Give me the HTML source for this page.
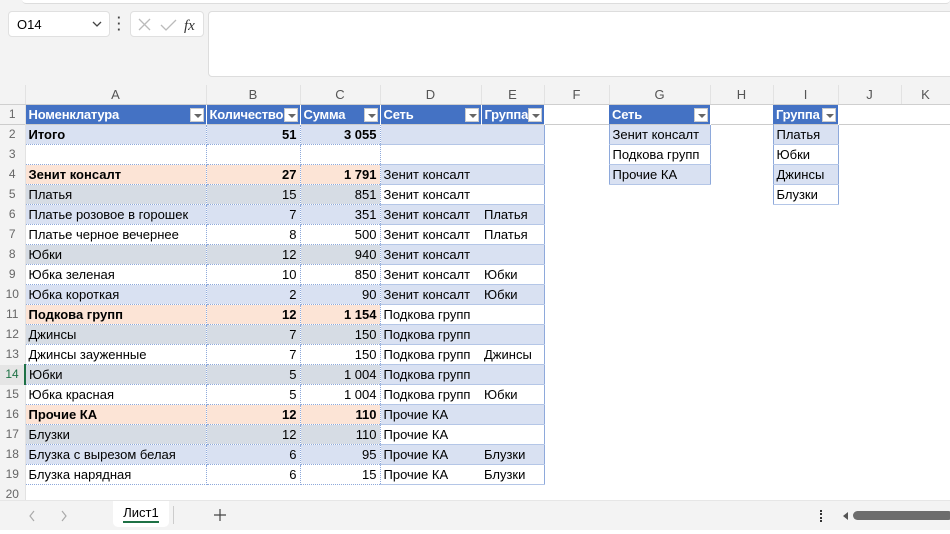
<!DOCTYPE html>
<html><head><meta charset="utf-8">
<style>
*{box-sizing:border-box;margin:0;padding:0}
body{width:950px;height:534px;overflow:hidden;background:#fff;font-family:"Liberation Sans",sans-serif;font-size:13px;color:#000;position:relative}
.top{position:absolute;left:0;top:0;width:950px;height:85px;background:#f3f3f3}
.topbar{position:absolute;left:22px;top:0;width:928px;height:4px;background:#fff;border-bottom:1px solid #ddd;border-radius:0 0 4px 4px}
.namebox{position:absolute;left:8px;top:11px;width:102px;height:26px;background:#fff;border:1px solid #e0e0e0;border-radius:4px;padding:5px 8px;font-size:13px}
.namebox .chev{position:absolute;right:6px;top:6px}
.dots{position:absolute;left:117px;top:15px;color:#444;font-size:13px;line-height:6px;font-weight:bold}
.fxbox{position:absolute;left:130px;top:11px;width:74px;height:26px;background:#fff;border:1px solid #e0e0e0;border-radius:4px}
.fbar{position:absolute;left:208px;top:11px;width:750px;height:66px;background:#fff;border:1px solid #ddd;border-radius:4px}
table{position:absolute;left:0;top:85px;width:950px;border-collapse:collapse;table-layout:fixed}
td{height:20px;padding:0 3px;white-space:nowrap;overflow:hidden;line-height:19px}
tr.ch td{height:19px;background:#f3f3f3;color:#555;text-align:center;border-right:1px solid #e2e2e2;border-bottom:1px solid #cfcfcf;font-size:13px}
td.rh{background:#f3f3f3;color:#666;text-align:center;padding:0;font-size:12px;border-right:1px solid #e2e2e2}
.r{text-align:right}
.b{font-weight:bold}
.h{background:#4472c4;color:#fff;font-weight:bold;position:relative;border-right:1px solid #fff;padding-right:18px;letter-spacing:-0.2px}
.h .dd{position:absolute;right:2px;top:3px;width:14px;height:14px;background:#fff;border:1px solid #ccc}
.h .dd:after{content:"";position:absolute;left:3px;top:5px;border-left:4px solid transparent;border-right:4px solid transparent;border-top:4px solid #666}
.bl{background:#d9e1f2}.pe{background:#fce4d6}.gr{background:#d6dce4}.wh{background:#fff}
.t1{border-right:1px dotted #8ea9db;border-bottom:1px dotted #8ea9db}
.t2{border-bottom:1px solid #b4c6e7}
.le{border-left:1px solid #8ea9db}.re{border-right:1px solid #8ea9db}
.tabs{position:absolute;left:0;top:500px;width:950px;height:34px;background:#f3f3f3;border-top:1px solid #e6e6e6}
.tab{position:absolute;left:113px;top:0;width:56px;height:26px;background:#fff;border-radius:0 0 5px 5px;text-align:center;font-size:13px;padding-top:4px}
.tab span{border-bottom:2px solid #1e7145;padding-bottom:1px}
.status{position:absolute;left:0;top:530px;width:950px;height:4px;background:#fff}
</style></head><body>
<div class="top">
<div class="topbar"></div>
<div class="namebox">O14<svg class="chev" width="12" height="12" viewBox="0 0 12 12"><path d="M2 4l4 4 4-4" fill="none" stroke="#444" stroke-width="1.3"/></svg></div>
<div class="dots">·<br>·<br>·</div>
<div class="fxbox"><svg width="74" height="26" viewBox="0 0 74 26"><path d="M8 7l11 11M19 7L8 18" stroke="#bbb" stroke-width="1.3" fill="none"/><path d="M30 13l5 5 10-10" stroke="#bbb" stroke-width="1.3" fill="none"/><text x="53" y="18" font-family="Liberation Serif" font-style="italic" font-size="15" fill="#333">fx</text></svg></div>
<div class="fbar"></div>
</div>
<table>
<colgroup><col style="width:25px"><col style="width:181px"><col style="width:94px"><col style="width:80px"><col style="width:101px"><col style="width:63px"><col style="width:65px"><col style="width:101px"><col style="width:63px"><col style="width:65px"><col style="width:63px"><col style="width:49px"></colgroup>
<tr class="ch"><td style="background:#f3f3f3"></td><td>A</td><td>B</td><td>C</td><td>D</td><td>E</td><td>F</td><td>G</td><td>H</td><td>I</td><td>J</td><td>K</td></tr>
<tr style="border-bottom:1px solid #ccc"><td class="rh">1</td><td class="h">Номенклатура<i class="dd"></i></td><td class="h">Количество<i class="dd"></i></td><td class="h">Сумма<i class="dd"></i></td><td class="h">Сеть<i class="dd"></i></td><td class="h">Группа<i class="dd"></i></td><td></td><td class="h">Сеть<i class="dd"></i></td><td></td><td class="h">Группа<i class="dd"></i></td><td></td><td></td></tr>
<tr><td class="rh">2</td><td class="bl t1 b">Итого</td><td class="bl t1 b r">51</td><td class="bl t1 b r">3 055</td><td class="bl t2"></td><td class="bl t2 re"></td><td></td><td class="bl t2 le re">Зенит консалт</td><td></td><td class="bl t2 le re">Платья</td><td></td><td></td></tr>
<tr><td class="rh">3</td><td class="wh t1"></td><td class="wh t1"></td><td class="wh t1"></td><td class="t2"></td><td class="t2 re"></td><td></td><td class="t2 le re">Подкова групп</td><td></td><td class="t2 le re">Юбки</td><td></td><td></td></tr>
<tr><td class="rh">4</td><td class="pe t1 b">Зенит консалт</td><td class="pe t1 b r">27</td><td class="pe t1 b r">1 791</td><td class="bl t2">Зенит консалт</td><td class="bl t2 re"></td><td></td><td class="bl t2 le re">Прочие КА</td><td></td><td class="bl t2 le re">Джинсы</td><td></td><td></td></tr>
<tr><td class="rh">5</td><td class="gr t1">Платья</td><td class="gr t1 r">15</td><td class="gr t1 r">851</td><td class="t2">Зенит консалт</td><td class="t2 re"></td><td></td><td></td><td></td><td class="t2 le re">Блузки</td><td></td><td></td></tr>
<tr><td class="rh">6</td><td class="bl t1">Платье розовое в горошек</td><td class="bl t1 r">7</td><td class="bl t1 r">351</td><td class="bl t2">Зенит консалт</td><td class="bl t2 re">Платья</td><td></td><td></td><td></td><td></td><td></td><td></td></tr>
<tr><td class="rh">7</td><td class="wh t1">Платье черное вечернее</td><td class="wh t1 r">8</td><td class="wh t1 r">500</td><td class="t2">Зенит консалт</td><td class="t2 re">Платья</td><td></td><td></td><td></td><td></td><td></td><td></td></tr>
<tr><td class="rh">8</td><td class="gr t1">Юбки</td><td class="gr t1 r">12</td><td class="gr t1 r">940</td><td class="bl t2">Зенит консалт</td><td class="bl t2 re"></td><td></td><td></td><td></td><td></td><td></td><td></td></tr>
<tr><td class="rh">9</td><td class="wh t1">Юбка зеленая</td><td class="wh t1 r">10</td><td class="wh t1 r">850</td><td class="t2">Зенит консалт</td><td class="t2 re">Юбки</td><td></td><td></td><td></td><td></td><td></td><td></td></tr>
<tr><td class="rh">10</td><td class="bl t1">Юбка короткая</td><td class="bl t1 r">2</td><td class="bl t1 r">90</td><td class="bl t2">Зенит консалт</td><td class="bl t2 re">Юбки</td><td></td><td></td><td></td><td></td><td></td><td></td></tr>
<tr><td class="rh">11</td><td class="pe t1 b">Подкова групп</td><td class="pe t1 b r">12</td><td class="pe t1 b r">1 154</td><td class="t2">Подкова групп</td><td class="t2 re"></td><td></td><td></td><td></td><td></td><td></td><td></td></tr>
<tr><td class="rh">12</td><td class="gr t1">Джинсы</td><td class="gr t1 r">7</td><td class="gr t1 r">150</td><td class="bl t2">Подкова групп</td><td class="bl t2 re"></td><td></td><td></td><td></td><td></td><td></td><td></td></tr>
<tr><td class="rh">13</td><td class="wh t1">Джинсы зауженные</td><td class="wh t1 r">7</td><td class="wh t1 r">150</td><td class="t2">Подкова групп</td><td class="t2 re">Джинсы</td><td></td><td></td><td></td><td></td><td></td><td></td></tr>
<tr><td class="rh" style="background:#e5e5e5;color:#1e7145;border-right:2px solid #1e7145">14</td><td class="gr t1">Юбки</td><td class="gr t1 r">5</td><td class="gr t1 r">1 004</td><td class="bl t2">Подкова групп</td><td class="bl t2 re"></td><td></td><td></td><td></td><td></td><td></td><td></td></tr>
<tr><td class="rh">15</td><td class="wh t1">Юбка красная</td><td class="wh t1 r">5</td><td class="wh t1 r">1 004</td><td class="t2">Подкова групп</td><td class="t2 re">Юбки</td><td></td><td></td><td></td><td></td><td></td><td></td></tr>
<tr><td class="rh">16</td><td class="pe t1 b">Прочие КА</td><td class="pe t1 b r">12</td><td class="pe t1 b r">110</td><td class="bl t2">Прочие КА</td><td class="bl t2 re"></td><td></td><td></td><td></td><td></td><td></td><td></td></tr>
<tr><td class="rh">17</td><td class="gr t1">Блузки</td><td class="gr t1 r">12</td><td class="gr t1 r">110</td><td class="t2">Прочие КА</td><td class="t2 re"></td><td></td><td></td><td></td><td></td><td></td><td></td></tr>
<tr><td class="rh">18</td><td class="bl t1">Блузка с вырезом белая</td><td class="bl t1 r">6</td><td class="bl t1 r">95</td><td class="bl t2">Прочие КА</td><td class="bl t2 re">Блузки</td><td></td><td></td><td></td><td></td><td></td><td></td></tr>
<tr><td class="rh">19</td><td class="wh t1">Блузка нарядная</td><td class="wh t1 r">6</td><td class="wh t1 r">15</td><td class="t2">Прочие КА</td><td class="t2 re">Блузки</td><td></td><td></td><td></td><td></td><td></td><td></td></tr>
<tr><td class="rh">20</td><td></td><td></td><td></td><td></td><td></td><td></td><td></td><td></td><td></td><td></td><td></td></tr>
</table>
<div class="tabs">
<svg style="position:absolute;left:26px;top:8px" width="50" height="14" viewBox="0 0 50 14"><path d="M8 2l-4 5 4 5M36 2l4 5-4 5" fill="none" stroke="#aaa" stroke-width="1.2"/></svg>
<div class="tab"><span>Лист1</span></div>
<div style="position:absolute;left:173px;top:5px;width:1px;height:18px;background:#ccc"></div>
<svg style="position:absolute;left:213px;top:7px" width="14" height="14" viewBox="0 0 14 14"><path d="M7 1v12M1 7h12" stroke="#444" stroke-width="1.2"/></svg>
<div style="position:absolute;left:820px;top:9px;width:2px;height:12px;border-left:2px dotted #333"></div>
<svg style="position:absolute;left:840px;top:9px" width="10" height="12" viewBox="0 0 10 12"><path d="M8 2L3 6l5 4z" fill="#555"/></svg>
<div style="position:absolute;left:853px;top:10px;width:100px;height:9px;background:#6d6d6d;border-radius:5px"></div>
</div>
<div class="status"></div>
</body></html>
